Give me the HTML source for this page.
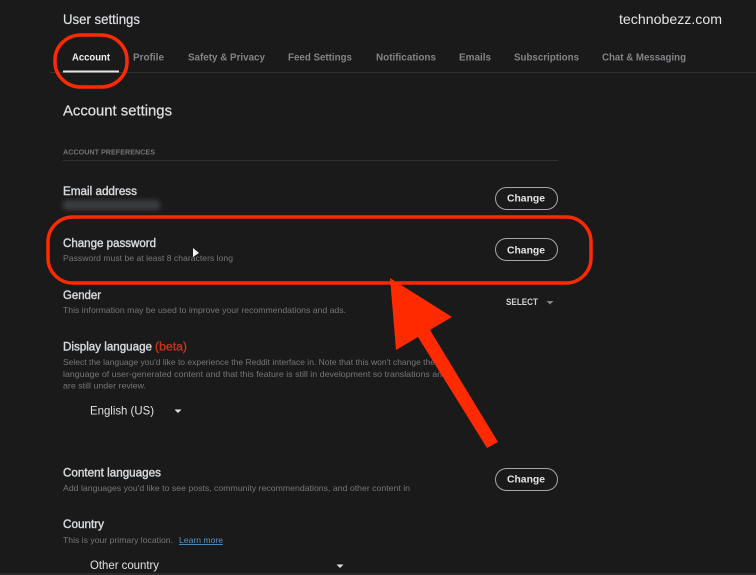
<!DOCTYPE html>
<html>
<head>
<meta charset="utf-8">
<style>
html,body{margin:0;padding:0;background:#1a1a1b;width:756px;height:575px;overflow:hidden}
svg{display:block}
text{font-family:"Liberation Sans",sans-serif}
.t{fill:#d7dadc;font-size:11.5px;stroke:#d7dadc;stroke-width:.4px}
.n{fill:#828486;font-weight:bold;font-size:10.5px}
.s{fill:#747678;font-size:8.5px}
.b{fill:#e4e6e7;font-weight:bold;font-size:10.5px}
</style>
</head>
<body>
<svg width="756" height="575" viewBox="0 0 756 575" xmlns="http://www.w3.org/2000/svg">
<rect width="756" height="575" fill="#1a1a1b"/>
<rect x="0" y="573" width="756" height="2" fill="#2a2b2d"/>
<text x="619" y="24" font-size="14" fill="#e6e6e6" textLength="103" lengthAdjust="spacingAndGlyphs">technobezz.com</text>
<g style="filter:blur(.35px)">
<text x="63" y="24" font-size="14" fill="#dfe1e3" stroke="#dfe1e3" stroke-width=".2" textLength="77" lengthAdjust="spacingAndGlyphs">User settings</text>

<rect x="50" y="72" width="706" height="1" fill="#2f3031"/>
<rect x="63" y="70.500" width="56" height="2" fill="#e4e6e7"/>
<text x="72" y="60.500" font-size="10.5" font-weight="bold" fill="#f0f1f2" textLength="38" lengthAdjust="spacingAndGlyphs">Account</text>
<text class="n" x="133" y="60.500" textLength="31" lengthAdjust="spacingAndGlyphs">Profile</text>
<text class="n" x="188" y="60.500" textLength="77" lengthAdjust="spacingAndGlyphs">Safety &amp; Privacy</text>
<text class="n" x="288" y="60.500" textLength="64" lengthAdjust="spacingAndGlyphs">Feed Settings</text>
<text class="n" x="376" y="60.500" textLength="60" lengthAdjust="spacingAndGlyphs">Notifications</text>
<text class="n" x="459" y="60.500" textLength="32" lengthAdjust="spacingAndGlyphs">Emails</text>
<text class="n" x="514" y="60.500" textLength="65" lengthAdjust="spacingAndGlyphs">Subscriptions</text>
<text class="n" x="602" y="60.500" textLength="84" lengthAdjust="spacingAndGlyphs">Chat &amp; Messaging</text>

<text x="63" y="115.500" font-size="15" fill="#dfe1e3" stroke="#dfe1e3" stroke-width=".2" textLength="109" lengthAdjust="spacingAndGlyphs">Account settings</text>

<text x="63" y="154.500" font-size="7.5" font-weight="bold" fill="#727476" textLength="92" lengthAdjust="spacingAndGlyphs">ACCOUNT PREFERENCES</text>
<rect x="63" y="160" width="495" height="1" fill="#2f3031"/>

<text class="t" x="63" y="195" textLength="74" lengthAdjust="spacingAndGlyphs">Email address</text>
<rect x="63" y="200" width="97" height="10" rx="3" fill="#3c3d3e" style="filter:blur(2.500px)"/>

<text class="t" x="63" y="247" textLength="93" lengthAdjust="spacingAndGlyphs">Change password</text>
<text class="s" x="63" y="261" textLength="170" lengthAdjust="spacingAndGlyphs">Password must be at least 8 characters long</text>

<text class="t" x="63" y="299" textLength="38" lengthAdjust="spacingAndGlyphs">Gender</text>
<text class="s" x="63" y="313" textLength="283" lengthAdjust="spacingAndGlyphs">This information may be used to improve your recommendations and ads.</text>

<text class="t" x="63" y="350.500" textLength="89" lengthAdjust="spacingAndGlyphs">Display language</text>
<text x="155" y="350.500" font-size="11.5" fill="#c2361e" stroke="#c2361e" stroke-width=".35" textLength="32" lengthAdjust="spacingAndGlyphs">(beta)</text>
<text class="s" x="63" y="365" textLength="372" lengthAdjust="spacingAndGlyphs">Select the language you'd like to experience the Reddit interface in. Note that this won't change the</text>
<text class="s" x="63" y="377" textLength="384" lengthAdjust="spacingAndGlyphs">language of user-generated content and that this feature is still in development so translations and</text>
<text class="s" x="63" y="388.500" textLength="83" lengthAdjust="spacingAndGlyphs">are still under review.</text>

<text x="90" y="414.500" font-size="12" fill="#dfe1e3" textLength="64" lengthAdjust="spacingAndGlyphs">English (US)</text>
<polygon points="174.500,409.500 181.500,409.500 178,413" fill="#dfe1e3"/>

<text class="t" x="63" y="476.500" textLength="98" lengthAdjust="spacingAndGlyphs">Content languages</text>
<text class="s" x="63" y="491" textLength="347" lengthAdjust="spacingAndGlyphs">Add languages you'd like to see posts, community recommendations, and other content in</text>

<text class="t" x="63" y="528" textLength="41" lengthAdjust="spacingAndGlyphs">Country</text>
<text class="s" x="63" y="543" textLength="110" lengthAdjust="spacingAndGlyphs">This is your primary location.</text>
<text x="179" y="543" font-size="8.5" fill="#5597cf" text-decoration="underline" textLength="44" lengthAdjust="spacingAndGlyphs">Learn more</text>

<text x="90" y="569" font-size="12" fill="#dfe1e3" textLength="69" lengthAdjust="spacingAndGlyphs">Other country</text>
<polygon points="336.500,564.500 343.500,564.500 340,568" fill="#dfe1e3"/>

<text x="506" y="305" font-size="9" font-weight="bold" fill="#d0d2d4" textLength="32" lengthAdjust="spacingAndGlyphs">SELECT</text>
<polygon points="546.500,301 553.500,301 550,304.500" fill="#828486"/>

<rect x="495.500" y="187.500" width="62" height="22" rx="11" fill="none" stroke="#a4a6a8" stroke-width="1"/>
<text class="b" x="507" y="201.500" textLength="38" lengthAdjust="spacingAndGlyphs">Change</text>
<rect x="495.500" y="238.500" width="62" height="22" rx="11" fill="none" stroke="#a4a6a8" stroke-width="1"/>
<text class="b" x="507" y="253.500" textLength="38" lengthAdjust="spacingAndGlyphs">Change</text>
<rect x="495.500" y="468.500" width="62" height="22" rx="11" fill="none" stroke="#a4a6a8" stroke-width="1"/>
<text class="b" x="507" y="482.500" textLength="38" lengthAdjust="spacingAndGlyphs">Change</text>
</g>

<polygon points="193,248 193,257 199,253" fill="#f2f2f2"/>

<rect x="55" y="35" width="72" height="52" rx="26" ry="25" fill="none" stroke="#ff2a00" stroke-width="3.500"/>
<rect x="48" y="217" width="543" height="66" rx="25" fill="none" stroke="#ff2a00" stroke-width="3.500"/>
<polygon points="390,278 452,317 430,330 498,442 487,448 418,337 396,350" fill="#ff2a00"/>
</svg>
</body>
</html>
